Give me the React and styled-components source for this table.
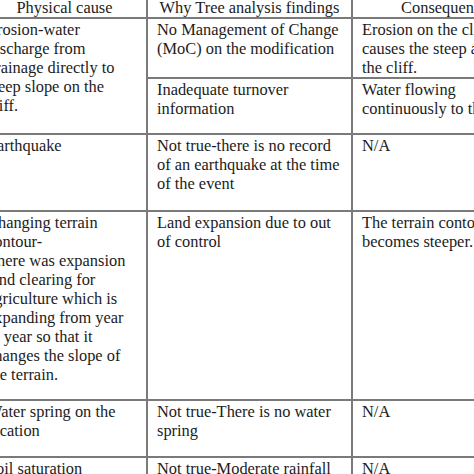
import React from 'react';
import styled, { createGlobalStyle } from 'styled-components';

const Global = createGlobalStyle`
  html, body {
    margin: 0;
    padding: 0;
    background: #ffffff;
    overflow: hidden;
  }
`;

const Frame = styled.div`
  width: 474px;
  height: 474px;
  overflow: hidden;
  background: #fff;
`;

const Table = styled.table`
  border-collapse: collapse;
  table-layout: fixed;
  width: 562px;
  margin: -7px 0 0 -19px;
  font-family: "Liberation Serif", "Times New Roman", serif;
  font-size: 16.4px;
  line-height: 19px;
  color: #1c1c1c;
`;

const Row = styled.tr`
  height: ${p => p.$h}px;
`;

const Head = styled.th`
  font-weight: normal;
  text-align: center;
  vertical-align: top;
  padding: 3px 0 0;
  border: 2px solid #7a7a7a;
  white-space: nowrap;
`;

const Cell = styled.td`
  vertical-align: top;
  text-align: left;
  padding: 1px 10px 0 9px;
`;

const CauseCell = styled(Cell)`
  padding: 1px 15px 0 4px;
  border: 2px solid #7a7a7a;
`;

const FindingCell = styled(Cell)`
  border: 2px solid #7a7a7a;
`;

export default function App() {
  return (
    <Frame>
      <Global />
      <Table>
        <colgroup>
          <col style={{ width: 165 }} />
          <col style={{ width: 205 }} />
          <col style={{ width: 192 }} />
        </colgroup>
        <thead>
          <Row $h={21}>
            <Head>Physical cause</Head>
            <Head>Why Tree analysis findings</Head>
            <Head>Consequences</Head>
          </Row>
        </thead>
        <tbody>
          <Row $h={54}>
            <CauseCell rowSpan={2}>Erosion-water discharge from drainage directly to steep slope on the cliff.</CauseCell>
            <FindingCell>No Management of Change (MoC) on the modification</FindingCell>
            <FindingCell>Erosion on the cliff causes the steep angle of the cliff.</FindingCell>
          </Row>
          <Row $h={56}>
            <FindingCell>Inadequate turnover information</FindingCell>
            <FindingCell>Water flowing continuously to the slope.</FindingCell>
          </Row>
          <Row $h={77}>
            <CauseCell>Earthquake</CauseCell>
            <FindingCell>Not true-there is no record of an earthquake at the time of the event</FindingCell>
            <FindingCell>N/A</FindingCell>
          </Row>
          <Row $h={189}>
            <CauseCell>Changing terrain contour-<br />There was expansion land clearing for agriculture which is expanding from year to year so that it changes the slope of the terrain.</CauseCell>
            <FindingCell>Land expansion due to out of control</FindingCell>
            <FindingCell>The terrain contour becomes steeper.</FindingCell>
          </Row>
          <Row $h={57}>
            <CauseCell>Water spring on the location</CauseCell>
            <FindingCell>Not true-There is no water spring</FindingCell>
            <FindingCell>N/A</FindingCell>
          </Row>
          <Row $h={60}>
            <CauseCell>Soil saturation</CauseCell>
            <FindingCell>Not true-Moderate rainfall</FindingCell>
            <FindingCell>N/A</FindingCell>
          </Row>
        </tbody>
      </Table>
    </Frame>
  );
}
